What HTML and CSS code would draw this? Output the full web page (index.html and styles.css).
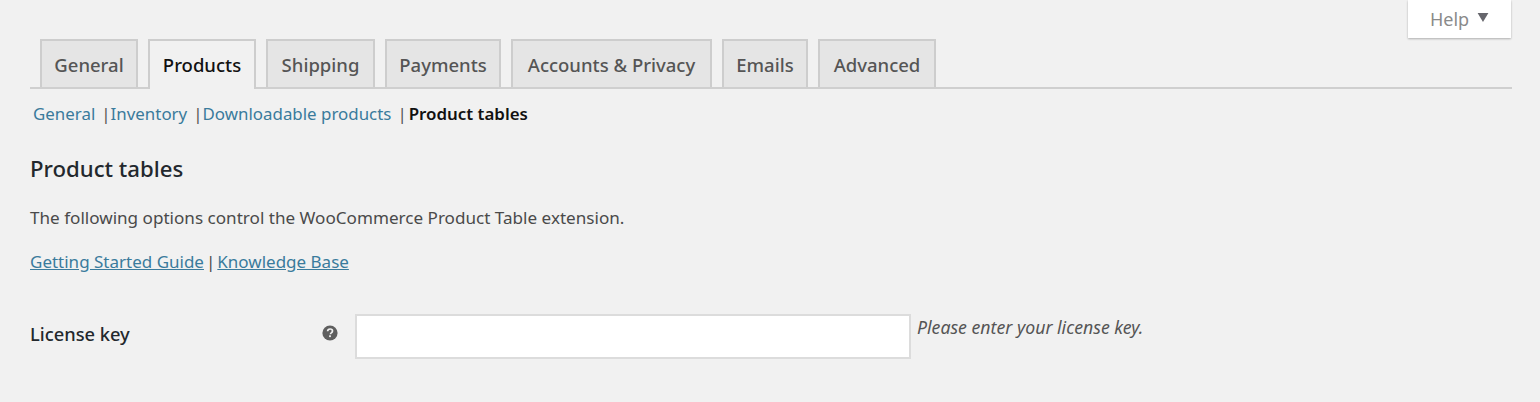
FILE: index.html
```html
<!DOCTYPE html>
<html lang="en">
<head>
<meta charset="utf-8">
<title>Product tables</title>
<link rel="stylesheet" href="styles.css">
</head>
<body>
<div class="help-row">
  <button class="help-tab">Help <svg class="help-caret" viewBox="0 0 12 10" width="12" height="9"><path d="M0 0h12L6 10z"/></svg></button>
</div>
<nav class="tabs">
  <a class="tab t1">General</a>
  <a class="tab active t2">Products</a>
  <a class="tab t3">Shipping</a>
  <a class="tab t4">Payments</a>
  <a class="tab t5">Accounts &amp; Privacy</a>
  <a class="tab t6">Emails</a>
  <a class="tab t7">Advanced</a>
</nav>
<ul class="subnav">
  <li><a>General</a><span class="sep">|</span></li>
  <li><a>Inventory</a><span class="sep">|</span></li>
  <li><a>Downloadable products</a><span class="sep">|</span></li>
  <li><strong>Product tables</strong></li>
</ul>
<h2 class="title">Product tables</h2>
<p class="desc">The following options control the WooCommerce Product Table extension.</p>
<p class="links"><a>Getting Started Guide</a><span class="links-sep">|</span><a>Knowledge Base</a></p>
<div class="field">
  <label class="field-label">License key</label>
  <span class="field-tip"><svg viewBox="0 0 16 16" width="16" height="16"><circle cx="8" cy="8" r="7.6" fill="#5f5f5f"/><path d="M5.6 6.300C5.700 4.800 6.700 4 8.100 4c1.400 0 2.400.8 2.400 2 0 1-.6 1.500-1.200 1.900-.6.4-.8.7-.8 1.300" fill="none" stroke="#f1f1f1" stroke-width="1.700"/><rect x="7.100" y="10.300" width="1.800" height="1.800" fill="#f1f1f1"/></svg></span>
  <input class="field-input" type="text" aria-label="License key">
  <em class="field-note">Please enter your license key.</em>
</div>
</body>
</html>
```
FILE: styles.css
```css
html, body { margin: 0; padding: 0; }
body {
  background: #f1f1f1;
  color: #4a4a4a;
  font-family: "Noto Sans", "Open Sans", sans-serif;
  font-size: 17px;
  height: 402px;
  overflow: hidden;
  padding-left: 30px;
  padding-right: 28px;
}
a { color: #3a7b9c; }
.help-row { display: flex; justify-content: flex-end; height: 39px; padding-right: 1px; }
.help-tab {
  width: 103px; height: 38px; border: 0; padding: 0;
  background: #fff; color: #8a8a8a;
  box-shadow: 0 1px 2px rgba(0,0,0,.28);
  font: inherit; font-size: 18px;
  display: flex; align-items: center; justify-content: center; gap: 8px;
}
.help-caret { fill: #66666c; margin-top: -4px; }
.tabs {
  display: flex; height: 50px; box-sizing: border-box;
  padding-left: 10px; border-bottom: 2px solid #cfcfcf;
}
.tab {
  box-sizing: border-box; height: 48px; padding-top: 1px;
  display: flex; align-items: center; justify-content: center;
  background: #e5e5e5; color: #555; border: 2px solid #cdcdcd; border-bottom: 0;
  font-size: 18.500px; font-weight: 500;
  margin-right: 10px;
}
.tab.active { height: 50px; background: #f1f1f1; color: #111; padding-bottom: 2px; }
.t1 { width: 98px; } .t2 { width: 108px; } .t3 { width: 109px; } .t4 { width: 116px; }
.t5 { width: 201px; } .t6 { width: 86px; } .t7 { width: 118px; }
.subnav { display: flex; list-style: none; margin: 0; padding: 12px 0 0 3px; height: 27px; line-height: 26px; font-size: 16.900px; }
.subnav li { white-space: pre; }
.subnav strong { color: #111; font-weight: 600; margin-left: 2px; }
.sep { color: #555; margin: 0 0 0 6px; }
.title { margin: 26px 0 0; font-size: 22.200px; font-weight: 500; color: #23282d; line-height: 30px; }
.desc { margin: 21px 0 0; line-height: 26px; font-size: 17.100px; }
.links { margin: 18px 0 0; line-height: 26px; font-size: 17px; }
.links a { text-decoration: underline; }
.links-sep { margin: 0 2px; }
.field { display: flex; align-items: flex-start; margin-top: 39px; }
.field-label { width: 292px; margin-top: 7px; font-size: 18.300px; font-weight: 500; color: #23282d; line-height: 26px; }
.field-tip { width: 33px; height: 16px; margin-top: 9px; }
.field-input { box-sizing: border-box; width: 556px; height: 45px; background: #fff; border: 2px solid #dcdcdc; margin: 0; padding: 0; }
.field-note { margin: 0 0 0 6px; line-height: 26px; font-size: 17.700px; color: #555; }
```
